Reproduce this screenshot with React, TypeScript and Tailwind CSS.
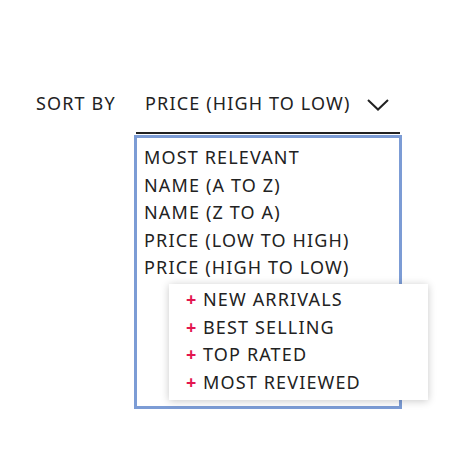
import React from 'react'

const sortOptions = ['MOST RELEVANT', 'NAME (A TO Z)', 'NAME (Z TO A)', 'PRICE (LOW TO HIGH)', 'PRICE (HIGH TO LOW)']
const extraOptions = ['NEW ARRIVALS', 'BEST SELLING', 'TOP RATED', 'MOST REVIEWED']

export default function App() {
  return (
    <div className="w-[474px] h-[473px] bg-white text-[#222] text-[18px] leading-[27px] tracking-[1.15px] font-['Noto_Sans',sans-serif]">
      <div className="flex pt-[90px] pl-[36px]">
        <div className="w-[98px]">SORT BY</div>

        <div className="w-[268px]">
          {/* Selected value */}
          <div className="flex items-center pl-[11px]">
            <span>PRICE (HIGH TO LOW)</span>
            <svg className="ml-[16px] mt-[2px]" width="22" height="12" viewBox="0 0 22 12" fill="none">
              <polyline points="1,1 11,10.5 21,1" stroke="#222" strokeWidth="2" />
            </svg>
          </div>
          <div className="mt-[15px] mx-[2px] h-[2px] bg-[#222]" />

          {/* Open list */}
          <div className="relative mt-[1px] h-[274px] border-[3px] border-[#7c9cd5] pl-[7px] pt-[6px]">
            {sortOptions.map(opt => (
              <div key={opt} className="leading-[27.5px]">{opt}</div>
            ))}

            {/* Overlay menu */}
            <div className="absolute left-[32px] top-[146px] w-[259px] h-[116px] bg-white pl-[17px] pt-[2px] shadow-[0_1px_8px_rgba(0,0,0,0.22)]">
              {extraOptions.map(opt => (
                <div key={opt} className="flex items-center leading-[27.5px]">
                  <span className="w-[17px] text-[#e3164f] font-bold">+</span>
                  <span>{opt}</span>
                </div>
              ))}
            </div>
          </div>
        </div>
      </div>
    </div>
  )
}
